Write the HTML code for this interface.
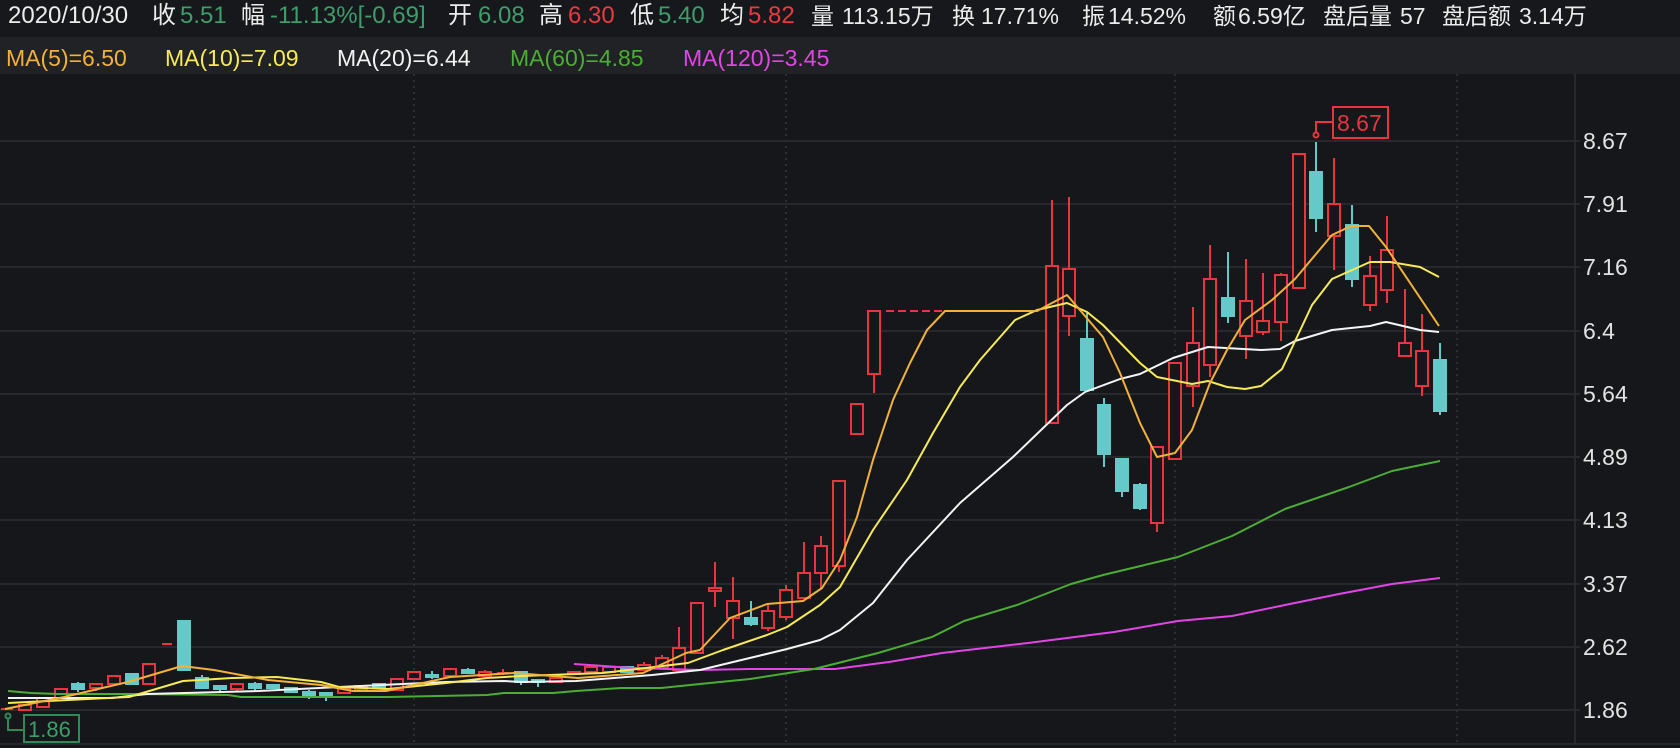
<!DOCTYPE html>
<html><head><meta charset="utf-8">
<style>
html,body{margin:0;padding:0;background:#15171b;}
#w{position:relative;width:1680px;height:748px;overflow:hidden;background:#15171b;font-family:"Liberation Sans","Noto Sans CJK SC",sans-serif;}
.top{position:absolute;left:0;top:0;width:1680px;height:37px;background:#16181c;}
.ma{position:absolute;left:0;top:37px;width:1680px;height:37px;background:#202226;}
.t{position:absolute;white-space:nowrap;font-size:23px;line-height:26px;}
.h{position:absolute;top:3px;white-space:nowrap;font-size:24px;line-height:26px;}
.s{font-size:23px}
.w{color:#ececec}.g{color:#3f9d6b}.r{color:#ea3a3f}
</style></head><body><div id="w">
<div class="top"></div><div class="ma"></div>
<div class="h w" style="left:8px">2020/10/30</div>
<div class="h w" style="left:152px">收</div><div class="h g" style="left:180px">5.51</div>
<div class="h w" style="left:241px">幅</div><div class="h g" style="left:270px">-11.13%[-0.69]</div>
<div class="h w" style="left:448px">开</div><div class="h g" style="left:478px">6.08</div>
<div class="h w" style="left:539px">高</div><div class="h r" style="left:568px">6.30</div>
<div class="h w" style="left:630px">低</div><div class="h g" style="left:658px">5.40</div>
<div class="h w" style="left:720px">均</div><div class="h r" style="left:748px">5.82</div>
<div class="h w s" style="left:811px">量</div><div class="h w s" style="left:842px">113.15万</div>
<div class="h w s" style="left:952px">换</div><div class="h w s" style="left:981px">17.71%</div>
<div class="h w s" style="left:1082px">振</div><div class="h w s" style="left:1108px">14.52%</div>
<div class="h w s" style="left:1213px">额</div><div class="h w s" style="left:1238px">6.59亿</div>
<div class="h w s" style="left:1323px">盘后量</div><div class="h w s" style="left:1400px">57</div>
<div class="h w s" style="left:1442px">盘后额</div><div class="h w s" style="left:1519px">3.14万</div>
<div class="t" style="left:6px;top:45px;color:#f2b13a">MA(5)=6.50</div>
<div class="t" style="left:165px;top:45px;color:#f7ea55">MA(10)=7.09</div>
<div class="t" style="left:337px;top:45px;color:#f2f2f2">MA(20)=6.44</div>
<div class="t" style="left:510px;top:45px;color:#4cad35">MA(60)=4.85</div>
<div class="t" style="left:683px;top:45px;color:#e245e6">MA(120)=3.45</div>

<svg style="position:absolute;left:0;top:0" width="1680" height="748">
<g stroke="#26282c" stroke-width="2">
<line x1="0" y1="141" x2="1580" y2="141"/><line x1="0" y1="204" x2="1580" y2="204"/>
<line x1="0" y1="267" x2="1580" y2="267"/><line x1="0" y1="331" x2="1580" y2="331"/>
<line x1="0" y1="394" x2="1580" y2="394"/><line x1="0" y1="457" x2="1580" y2="457"/>
<line x1="0" y1="520" x2="1580" y2="520"/><line x1="0" y1="584" x2="1580" y2="584"/>
<line x1="0" y1="647" x2="1580" y2="647"/><line x1="0" y1="710" x2="1580" y2="710"/>
<line x1="0" y1="744" x2="1680" y2="744"/>
<line x1="1575" y1="74" x2="1575" y2="744"/>
</g>
<g stroke="#2c2e33" stroke-width="2" stroke-dasharray="2,4">
<line x1="414" y1="74" x2="414" y2="744"/><line x1="786" y1="74" x2="786" y2="744"/>
<line x1="1175" y1="74" x2="1175" y2="744"/><line x1="1457" y1="74" x2="1457" y2="744"/>
</g>
<g font-size="23" fill="#e2e2e2" font-family="Liberation Sans, sans-serif">
<text x="1583" y="149">8.67</text><text x="1583" y="212">7.91</text><text x="1583" y="275">7.16</text>
<text x="1583" y="339">6.4</text><text x="1583" y="402">5.64</text><text x="1583" y="465">4.89</text>
<text x="1583" y="528">4.13</text><text x="1583" y="592">3.37</text><text x="1583" y="655">2.62</text>
<text x="1583" y="718">1.86</text>
</g>

<g stroke="#e8353f" stroke-width="2" fill="#15171b">
<line x1="1" y1="709" x2="13" y2="709"/>
<rect x="19" y="705" width="12" height="5"/>
<line x1="43" y1="697" x2="43" y2="708"/><rect x="37" y="698" width="12" height="9"/>
<rect x="55" y="689" width="12" height="9"/>
<line x1="96" y1="684" x2="96" y2="691"/><rect x="90" y="684" width="12" height="4"/>
<rect x="108" y="676" width="12" height="8"/>
<rect x="143" y="664" width="12" height="20"/>
<line x1="162" y1="644" x2="172" y2="644"/>
<line x1="237" y1="684" x2="237" y2="692"/><rect x="231" y="684" width="12" height="5"/>
<rect x="338" y="688" width="12" height="5"/>
<rect x="355" y="686" width="12" height="4"/>
<rect x="391" y="679" width="12" height="11"/>
<line x1="414" y1="671" x2="414" y2="680"/><rect x="408" y="672" width="12" height="7"/>
<line x1="450" y1="668" x2="450" y2="676"/><rect x="444" y="669" width="12" height="7"/>
<line x1="485" y1="670" x2="485" y2="677"/><rect x="479" y="672" width="12" height="4"/>
<line x1="503" y1="669" x2="503" y2="675"/><line x1="497" y1="673" x2="509" y2="673"/>
<rect x="550" y="678" width="12" height="4"/>
<rect x="568" y="672" width="12" height="2"/>
<rect x="585" y="667" width="12" height="5"/>
<rect x="603" y="667" width="12" height="5"/>
<line x1="644" y1="662" x2="644" y2="671"/><rect x="638" y="665" width="12" height="5"/>
<line x1="662" y1="655" x2="662" y2="669"/><rect x="656" y="658" width="12" height="10"/>
<line x1="679" y1="627" x2="679" y2="648"/><rect x="673" y="648" width="12" height="22"/>
<rect x="691" y="603" width="12" height="50"/>
<line x1="715" y1="562" x2="715" y2="607"/><rect x="709" y="588" width="12" height="3"/>
<line x1="733" y1="577" x2="733" y2="639"/><rect x="727" y="601" width="12" height="17"/>
<line x1="768" y1="605" x2="768" y2="631"/><rect x="762" y="611" width="12" height="17"/>
<line x1="786" y1="585" x2="786" y2="620"/><rect x="780" y="590" width="12" height="27"/>
<line x1="804" y1="542" x2="804" y2="573"/><rect x="798" y="573" width="12" height="25"/>
<line x1="821" y1="536" x2="821" y2="588"/><rect x="815" y="546" width="12" height="27"/>
<line x1="839" y1="566" x2="839" y2="572"/><rect x="833" y="481" width="12" height="85"/>
<rect x="851" y="404" width="12" height="30"/>
<line x1="874" y1="374" x2="874" y2="393"/><rect x="868" y="311" width="12" height="63"/>
<g stroke-dasharray="8,4"><line x1="886" y1="311" x2="1040" y2="311"/></g>
<line x1="1052" y1="200" x2="1052" y2="266"/><rect x="1046" y="266" width="12" height="157"/>
<line x1="1069" y1="197" x2="1069" y2="336"/><rect x="1063" y="269" width="12" height="47"/>
<line x1="1157" y1="523" x2="1157" y2="532"/><rect x="1151" y="447" width="12" height="76"/>
<rect x="1169" y="363" width="12" height="96"/>
<line x1="1193" y1="307" x2="1193" y2="407"/><rect x="1187" y="343" width="12" height="43"/>
<line x1="1210" y1="245" x2="1210" y2="377"/><rect x="1204" y="279" width="12" height="86"/>
<line x1="1246" y1="259" x2="1246" y2="359"/><rect x="1240" y="301" width="12" height="35"/>
<line x1="1263" y1="273" x2="1263" y2="335"/><rect x="1257" y="321" width="12" height="11"/>
<line x1="1281" y1="273" x2="1281" y2="341"/><rect x="1275" y="275" width="12" height="47"/>
<rect x="1293" y="154" width="12" height="134"/>
<line x1="1334" y1="158" x2="1334" y2="270"/><rect x="1328" y="204" width="12" height="32"/>
<line x1="1370" y1="256" x2="1370" y2="311"/><rect x="1364" y="276" width="12" height="29"/>
<line x1="1387" y1="216" x2="1387" y2="303"/><rect x="1381" y="250" width="12" height="40"/>
<line x1="1405" y1="289" x2="1405" y2="343"/><rect x="1399" y="343" width="12" height="13"/>
<line x1="1422" y1="314" x2="1422" y2="396"/><rect x="1416" y="351" width="12" height="35"/>
</g>
<g stroke="#66c9c9" stroke-width="2" fill="#66c9c9">
<line x1="78" y1="682" x2="78" y2="692"/><rect x="72" y="684" width="12" height="5"/>
<rect x="126" y="674" width="12" height="10"/>
<rect x="178" y="621" width="12" height="49"/>
<line x1="202" y1="675" x2="202" y2="688"/><rect x="196" y="678" width="12" height="10"/>
<line x1="220" y1="686" x2="220" y2="693"/><rect x="214" y="686" width="12" height="3"/>
<line x1="255" y1="682" x2="255" y2="692"/><rect x="249" y="684" width="12" height="4"/>
<rect x="267" y="685" width="12" height="3"/>
<rect x="285" y="688" width="12" height="4"/>
<line x1="309" y1="690" x2="309" y2="699"/><rect x="303" y="692" width="12" height="4"/>
<line x1="326" y1="693" x2="326" y2="701"/><rect x="320" y="693" width="12" height="4"/>
<rect x="373" y="684" width="12" height="3"/>
<line x1="432" y1="671" x2="432" y2="679"/><rect x="426" y="675" width="12" height="2"/>
<line x1="468" y1="668" x2="468" y2="674"/><rect x="462" y="670" width="12" height="3"/>
<line x1="521" y1="671" x2="521" y2="685"/><rect x="515" y="672" width="12" height="10"/>
<line x1="538" y1="680" x2="538" y2="687"/><rect x="532" y="680" width="12" height="2"/>
<rect x="621" y="667" width="12" height="5"/>
<line x1="751" y1="601" x2="751" y2="626"/><rect x="745" y="618" width="12" height="6"/>
<line x1="1087" y1="313" x2="1087" y2="339"/><rect x="1081" y="339" width="12" height="51"/>
<line x1="1104" y1="398" x2="1104" y2="467"/><rect x="1098" y="405" width="12" height="49"/>
<line x1="1122" y1="491" x2="1122" y2="497"/><rect x="1116" y="459" width="12" height="32"/>
<line x1="1140" y1="483" x2="1140" y2="510"/><rect x="1134" y="485" width="12" height="23"/>
<line x1="1228" y1="252" x2="1228" y2="323"/><rect x="1222" y="298" width="12" height="18"/>
<line x1="1316" y1="142" x2="1316" y2="232"/><rect x="1310" y="172" width="12" height="46"/>
<line x1="1352" y1="205" x2="1352" y2="287"/><rect x="1346" y="225" width="12" height="54"/>
<line x1="1440" y1="343" x2="1440" y2="415"/><rect x="1434" y="360" width="12" height="51"/>
</g>

<g fill="none" stroke-width="2" stroke-linejoin="round">
<polyline stroke="#e245e6" points="574,664 634,668 700,670 750,669 835,669 889,662 942,653 1028,643 1114,632 1178,621 1232,616 1285,605 1339,594 1392,584 1440,578"/>
<polyline stroke="#4cad35" points="8,691 31,693 58,694 134,694 228,695 241,697 388,697 487,695 504,693 553,693 576,691 621,688 661,688 700,684 750,679 814,669 878,653 932,637 964,621 1017,605 1071,584 1103,575 1178,557 1232,536 1285,509 1349,487 1392,471 1440,461"/>
<polyline stroke="#f4f4f4" points="8,698 112,698 147,694 259,691 339,687 446,682 504,681 522,682 576,681 652,675 700,670 787,649 820,640 840,630 873,603 907,560 960,503 1013,457 1067,405 1085,392 1120,379 1140,374 1173,358 1208,347 1261,350 1280,349 1295,341 1332,330 1370,326 1386,322 1420,330 1439,332"/>
<polyline stroke="#f7ea55" points="8,703 129,697 183,681 232,678 277,677 321,682 339,687 388,689 446,683 487,678 522,676 603,673 688,663 723,650 767,635 787,627 820,605 840,587 873,530 907,480 933,433 960,387 980,360 1015,320 1037,310 1067,303 1087,312 1103,325 1140,363 1157,377 1192,384 1208,381 1227,387 1245,389 1261,386 1282,369 1312,305 1332,279 1370,262 1390,262 1420,267 1439,277"/>
<polyline stroke="#f2b13a" points="5,709 64,697 128,682 182,666 214,670 268,680 321,685 353,691 386,691 450,677 514,673 578,678 643,673 686,653 700,650 730,618 767,604 803,601 822,588 840,560 857,517 873,460 893,400 910,363 927,330 945,311 1037,311 1067,295 1103,337 1120,373 1140,423 1157,457 1175,453 1192,430 1210,383 1227,350 1245,320 1272,300 1295,279 1332,235 1351,226 1369,226 1386,247 1439,326"/>
</g>

<g stroke="#e8353f" stroke-width="2" fill="none">
<circle cx="1316" cy="135" r="2.5"/>
<polyline points="1316,132 1316,122 1333,122"/>
<rect x="1333" y="107" width="55" height="31"/>
</g>
<text x="1337" y="131" font-size="23" fill="#e8353f" font-family="Liberation Sans, sans-serif">8.67</text>
<g stroke="#2e8b57" stroke-width="2" fill="none">
<circle cx="8" cy="716" r="2.5"/>
<polyline points="8,719 8,730 24,730"/>
<rect x="24" y="715" width="55" height="27"/>
</g>
<text x="28" y="737" font-size="22" fill="#3f9d6b" font-family="Liberation Sans, sans-serif">1.86</text>
</svg>
</div></body></html>
